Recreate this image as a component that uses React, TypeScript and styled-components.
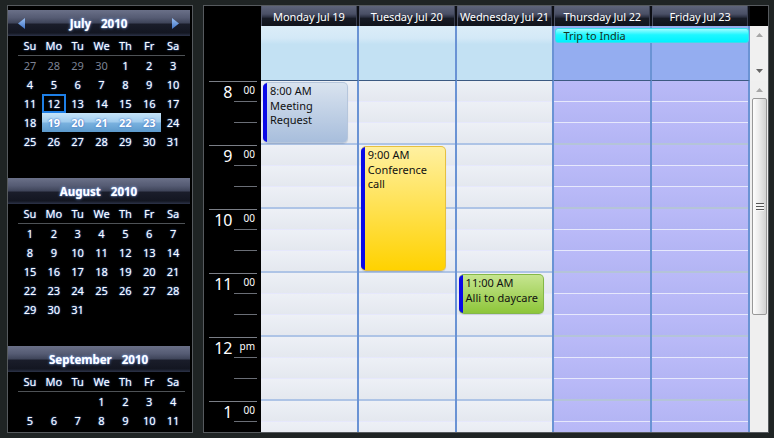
import React from 'react';
import styled, { createGlobalStyle } from 'styled-components';

const Global = createGlobalStyle`
  html, body { margin: 0; padding: 0; background: #1f2424; }
  body { font-family: "Noto Sans", "Open Sans", sans-serif; }
`;

const Page = styled.div`
  display: flex;
  gap: 10px;
  padding: 5px 5px 5px 7px;
  height: 438px;
  box-sizing: border-box;
`;

/* ---------- Mini calendars ---------- */

const LeftPanel = styled.div`
  width: 186px;
  height: 428px;
  box-sizing: border-box;
  border: 1px solid #565a5e;
  background: #000;
  padding-top: 4px;
  overflow: hidden;
`;

const MonthBlock = styled.div`
  margin-bottom: 8px;
`;

const MonthHeader = styled.div`
  height: 26px;
  margin-right: 2px;
  display: flex;
  align-items: center;
  justify-content: space-between;
  padding: 0 11px 0 10px;
  background: linear-gradient(
    to bottom,
    #6a7088 0%,
    #555b73 30%,
    #3e4459 50%,
    #1a1d2a 54%,
    #131621 88%,
    #2c3348 100%
  );
  color: #fff;
  font-weight: 700;
  font-size: 11.5px;
  text-shadow: 0 0 3px #7ea6f0, 0 0 1px #9cc0ff;
`;

const MonthTitle = styled.div`
  display: flex;
  gap: 10px;
`;

const NavArrow = styled.svg<{ $hidden?: boolean }>`
  width: 7px;
  height: 11px;
  visibility: ${(p) => (p.$hidden ? 'hidden' : 'visible')};
`;

const DowRow = styled.div`
  display: grid;
  grid-template-columns: repeat(7, 1fr);
  margin: 0 7px 0 10px;
  height: 19px;
  border-bottom: 1px solid #4e5256;
`;

const DayGrid = styled.div`
  display: grid;
  grid-template-columns: repeat(7, 1fr);
  grid-template-rows: repeat(6, 19px);
  margin: 0 7px 0 10px;
`;

const CalCell = styled.div<{ $other?: boolean; $sel?: boolean; $today?: boolean }>`
  display: flex;
  align-items: center;
  justify-content: center;
  font-size: 11px;
  color: ${(p) => (p.$other ? '#7c8294' : '#ffffff')};
  text-shadow: ${(p) =>
    p.$other ? 'none' : '0 0 2px #3f6fc0, 0 0 1px #5b8ad8'};
  font-weight: ${(p) => (p.$sel ? 700 : 400)};
  background: ${(p) =>
    p.$sel
      ? 'linear-gradient(to bottom, #c6e4f8 0%, #a2cdee 45%, #78b0de 55%, #5c9acc 100%)'
      : 'transparent'};
  box-shadow: ${(p) => (p.$today ? 'inset 0 0 0 2px #1e7fe6' : 'none')};
`;

type Day = { d: number | null; other?: boolean };

const dows = ['Su', 'Mo', 'Tu', 'We', 'Th', 'Fr', 'Sa'];

const range = (a: number, b: number): Day[] => {
  const r: Day[] = [];
  for (let i = a; i <= b; i++) r.push({ d: i });
  return r;
};

/* September is cut by the panel's bottom edge: only the visible weeks are listed. */
const months: {
  name: string;
  nav?: boolean;
  days: Day[];
  sel?: number[];
  today?: number;
}[] = [
  {
    name: 'July',
    nav: true,
    days: [
      { d: 27, other: true },
      { d: 28, other: true },
      { d: 29, other: true },
      { d: 30, other: true },
      ...range(1, 31),
    ],
    sel: [19, 20, 21, 22, 23],
    today: 12,
  },
  { name: 'August', days: range(1, 31) },
  {
    name: 'September',
    days: [{ d: null }, { d: null }, { d: null }, ...range(1, 11)],
  },
];

const Arrow: React.FC<{ dir: 'l' | 'r'; hidden?: boolean }> = ({ dir, hidden }) => (
  <NavArrow viewBox="0 0 7 11" $hidden={hidden}>
    <defs>
      <linearGradient id={`ag${dir}`} x1="0" y1="0" x2="0" y2="1">
        <stop offset="0" stopColor="#9cc2f4" />
        <stop offset="1" stopColor="#3f72c4" />
      </linearGradient>
    </defs>
    <path d={dir === 'l' ? 'M7 0 L0 5.5 L7 11 Z' : 'M0 0 L7 5.5 L0 11 Z'} fill={`url(#ag${dir})`} />
  </NavArrow>
);

const MiniCalendar: React.FC<(typeof months)[number]> = ({ name, nav, days, sel, today }) => (
  <MonthBlock>
    <MonthHeader>
      <Arrow dir="l" hidden={!nav} />
      <MonthTitle>
        <span>{name}</span>
        <span>2010</span>
      </MonthTitle>
      <Arrow dir="r" hidden={!nav} />
    </MonthHeader>
    <DowRow>
      {dows.map((d) => (
        <CalCell key={d}>{d}</CalCell>
      ))}
    </DowRow>
    <DayGrid>
      {days.map((day, i) => (
        <CalCell
          key={i}
          $other={day.other}
          $sel={!day.other && day.d !== null && !!sel && sel.includes(day.d)}
          $today={!day.other && day.d === today}
        >
          {day.d ?? ''}
        </CalCell>
      ))}
    </DayGrid>
  </MonthBlock>
);

/* ---------- Scheduler ---------- */

const Scheduler = styled.div`
  width: 566px;
  height: 428px;
  box-sizing: border-box;
  border: 1px solid #565a5e;
  background: #000;
  display: grid;
  grid-template-columns: 57px repeat(5, 1fr) 18px;
  grid-template-rows: 20px 55px 1fr;
  overflow: hidden;
`;

const DayHeader = styled.div`
  grid-row: 1;
  display: flex;
  align-items: center;
  justify-content: center;
  background: linear-gradient(
    to bottom,
    #5e647a 0%,
    #4a5066 40%,
    #2c3142 55%,
    #171b25 62%,
    #10131b 100%
  );
  border-right: 2px solid #0c0e14;
  box-shadow: inset -1px 0 0 #3a4052, inset 1px 0 0 #4e5468;
  color: #fff;
  font-size: 11px;
  white-space: nowrap;
  letter-spacing: -0.1px;
`;

const AllDayCell = styled.div<{ $free?: boolean }>`
  grid-row: 2;
  border-right: 2px solid #6a93d4;
  border-bottom: 1px solid #3c5a82;
  background: ${(p) =>
    p.$free
      ? '#94adf0'
      : 'linear-gradient(to bottom, #dbedf8 0%, #d4e9f7 22%, #c3e1f3 34%, #c3e1f3 100%)'};
`;

const AllDayEvent = styled.div`
  grid-row: 2;
  grid-column: 5 / 7;
  align-self: start;
  margin: 2px 1px 0 1px;
  height: 15px;
  box-sizing: border-box;
  border-radius: 3px;
  border: 1px solid #3cdcec;
  background: linear-gradient(to bottom, #9efcff 0%, #1ef6ff 45%, #00f2ff 100%);
  color: #16331c;
  font-size: 11px;
  line-height: 13px;
  padding-left: 7px;
`;

const ScrollMini = styled.div`
  grid-row: 2;
  grid-column: 7;
  background: #f0f0f0;
  display: flex;
  flex-direction: column;
  justify-content: space-between;
  align-items: center;
  padding: 7px 0 8px;
`;

const ArrowIcon = styled.svg<{ $dim?: boolean }>`
  width: 7px;
  height: 4px;
  fill: ${(p) => (p.$dim ? '#a6a6a6' : '#646464')};
`;

const TimeColumn = styled.div`
  grid-row: 3;
  grid-column: 1;
  min-height: 0;
  overflow: hidden;
  display: flex;
  flex-direction: column;
`;

const TimeBlock = styled.div`
  flex-shrink: 0;
  height: 64px;
  width: 48px;
  margin-left: 5px;
  box-sizing: border-box;
  border-top: 1px solid #7a7e86;
  display: grid;
  grid-template-columns: 23px 25px;
  grid-template-rows: 20px 21px 1fr;
  color: #fff;
`;

const HourNum = styled.div`
  grid-row: 1 / 3;
  grid-column: 1;
  text-align: right;
  font-size: 16px;
  line-height: 16px;
  padding-top: 2px;
  letter-spacing: -0.3px;
`;

const MinuteCell = styled.div`
  grid-row: 1;
  grid-column: 2;
  margin-left: 2px;
  border-bottom: 1px solid #6a6e76;
  text-align: right;
  font-size: 10px;
  line-height: 10px;
  padding: 3px 2px 0 0;
`;

const HalfLine = styled.div`
  grid-row: 2;
  grid-column: 2;
  margin-left: 2px;
  border-bottom: 1px solid #6a6e76;
`;

const DayBody = styled.div`
  grid-row: 3;
  position: relative;
  min-height: 0;
  overflow: hidden;
  border-right: 2px solid #6a93d4;
  display: flex;
  flex-direction: column;
`;

const HourBlock = styled.div<{ $free?: boolean }>`
  flex-shrink: 0;
  height: 64px;
  box-sizing: border-box;
  border-bottom: 2px solid ${(p) => (p.$free ? '#b4c4d8' : '#aec4e6')};
  display: flex;
  flex-direction: column;
`;

const Slot = styled.div<{ $free?: boolean }>`
  flex: 1;
  background: ${(p) =>
    p.$free
      ? 'linear-gradient(to bottom, #babaf8, #b3b5f4)'
      : 'linear-gradient(to bottom, #edf0f6, #e4e8ef)'};
  & + & {
    border-top: 1px solid ${(p) => (p.$free ? '#e6e8fc' : '#f7f8fb')};
  }
`;

const Appt = styled.div<{ $from: string; $to: string; $border: string }>`
  position: absolute;
  left: 2px;
  width: 85px;
  box-sizing: border-box;
  display: flex;
  border-radius: 5px;
  overflow: hidden;
  border: 1px solid ${(p) => p.$border};
  border-left: none;
  background: linear-gradient(to bottom, ${(p) => p.$from}, ${(p) => p.$to});
  box-shadow: 0 1px 1px rgba(0, 0, 0, 0.12);
`;

const ApptBar = styled.div`
  width: 4px;
  flex-shrink: 0;
  background: #0a0ae6;
`;

const ApptText = styled.div`
  padding: 1px 3px 0 3px;
  font-size: 11px;
  line-height: 14.5px;
  color: #111;
`;

const ScrollMain = styled.div`
  grid-row: 3;
  grid-column: 7;
  min-height: 0;
  background: #efefef;
  display: flex;
  flex-direction: column;
  padding: 0 1px 0 2px;
`;

const ScrollBtn = styled.div`
  height: 17px;
  flex-shrink: 0;
  display: flex;
  align-items: center;
  justify-content: center;
`;

const Thumb = styled.div`
  height: 217px;
  flex-shrink: 0;
  box-sizing: border-box;
  border: 1px solid #989898;
  border-radius: 2px;
  background: linear-gradient(to right, #fdfdfd 0%, #ececec 45%, #d2d2d2 100%);
  display: flex;
  align-items: center;
  justify-content: center;
`;

const Grip = styled.div`
  width: 8px;
  height: 8px;
  background: repeating-linear-gradient(to bottom, #555 0 1px, #f6f6f6 1px 3px);
`;

const days = [
  { label: 'Monday Jul 19', free: false },
  { label: 'Tuesday Jul 20', free: false },
  { label: 'Wednesday Jul 21', free: false },
  { label: 'Thursday Jul 22', free: true },
  { label: 'Friday Jul 23', free: true },
];

const hours = [
  { h: '8', m: '00' },
  { h: '9', m: '00' },
  { h: '10', m: '00' },
  { h: '11', m: '00' },
  { h: '12', m: 'pm' },
  { h: '1', m: '00' },
];

const appts: Record<number, { top: number; height: number; from: string; to: string; border: string; lines: string[] }> = {
  0: { top: 1, height: 61, from: '#d9e3ef', to: '#a8bedc', border: '#b6c6dc', lines: ['8:00 AM', 'Meeting', 'Request'] },
  1: { top: 65, height: 125, from: '#fff0a0', to: '#ffd200', border: '#e6c040', lines: ['9:00 AM', 'Conference', 'call'] },
  2: { top: 193, height: 40, from: '#c6e590', to: '#8ec63a', border: '#84b848', lines: ['11:00 AM', 'Alli to daycare'] },
};

const Up: React.FC<{ dim?: boolean }> = ({ dim }) => (
  <ArrowIcon viewBox="0 0 7 4" $dim={dim}>
    <path d="M0 4 L3.5 0 L7 4 Z" />
  </ArrowIcon>
);
const Down: React.FC<{ dim?: boolean }> = ({ dim }) => (
  <ArrowIcon viewBox="0 0 7 4" $dim={dim}>
    <path d="M0 0 L7 0 L3.5 4 Z" />
  </ArrowIcon>
);

export default function App() {
  return (
    <>
      <Global />
      <Page>
        <LeftPanel>
          {months.map((m) => (
            <MiniCalendar key={m.name} {...m} />
          ))}
        </LeftPanel>
        <Scheduler>
          {days.map((d, i) => (
            <DayHeader key={d.label} style={{ gridColumn: i + 2 }}>
              {d.label}
            </DayHeader>
          ))}
          {days.map((d, i) => (
            <AllDayCell key={'a' + i} $free={d.free} style={{ gridColumn: i + 2 }} />
          ))}
          <AllDayEvent>Trip to India</AllDayEvent>
          <ScrollMini>
            <Up dim />
            <Down />
          </ScrollMini>
          <TimeColumn>
            {hours.map((h) => (
              <TimeBlock key={h.h}>
                <HourNum>{h.h}</HourNum>
                <MinuteCell>{h.m}</MinuteCell>
                <HalfLine />
              </TimeBlock>
            ))}
          </TimeColumn>
          {days.map((d, i) => {
            const a = appts[i];
            return (
              <DayBody key={'b' + i} style={{ gridColumn: i + 2 }}>
                {hours.map((h) => (
                  <HourBlock key={h.h} $free={d.free}>
                    <Slot $free={d.free} />
                    <Slot $free={d.free} />
                    <Slot $free={d.free} />
                  </HourBlock>
                ))}
                {a && (
                  <Appt
                    style={{ top: a.top, height: a.height }}
                    $from={a.from}
                    $to={a.to}
                    $border={a.border}
                  >
                    <ApptBar />
                    <ApptText>
                      {a.lines.map((l) => (
                        <div key={l}>{l}</div>
                      ))}
                    </ApptText>
                  </Appt>
                )}
              </DayBody>
            );
          })}
          <ScrollMain>
            <ScrollBtn>
              <Up dim />
            </ScrollBtn>
            <Thumb>
              <Grip />
            </Thumb>
          </ScrollMain>
        </Scheduler>
      </Page>
    </>
  );
}
